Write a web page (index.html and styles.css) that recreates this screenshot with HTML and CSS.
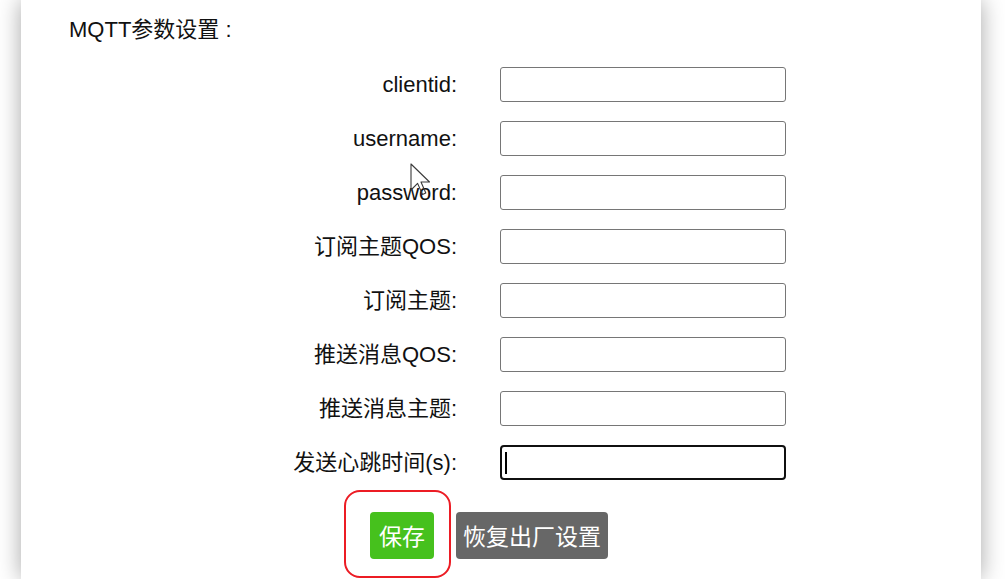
FILE: index.html
```html
<!DOCTYPE html>
<html lang="zh-CN">
<head>
    <meta charset="UTF-8">
    <meta name="viewport" content="width=device-width, initial-scale=1.0">
    <title>MQTT参数设置</title>
    <link rel="stylesheet" href="styles.css">
</head>
<body>
    <div class="card">
        <p class="title">MQTT参数设置 :</p>

        <form class="mqtt-form" id="mqttForm">
            <div class="row">
                <label for="clientid">clientid:</label>
                <input type="text" id="clientid" name="clientid">
            </div>
            <div class="row">
                <label for="username">username:</label>
                <input type="text" id="username" name="username">
            </div>
            <div class="row">
                <label for="password">password:</label>
                <input type="password" id="password" name="password">
            </div>
            <div class="row">
                <label for="subQos">订阅主题QOS:</label>
                <input type="text" id="subQos" name="subQos">
            </div>
            <div class="row">
                <label for="subTopic">订阅主题:</label>
                <input type="text" id="subTopic" name="subTopic">
            </div>
            <div class="row">
                <label for="pubQos">推送消息QOS:</label>
                <input type="text" id="pubQos" name="pubQos">
            </div>
            <div class="row">
                <label for="pubTopic">推送消息主题:</label>
                <input type="text" id="pubTopic" name="pubTopic">
            </div>
            <div class="row">
                <label for="keepalive">发送心跳时间(s):</label>
                <span class="field-wrap">
                    <input type="text" id="keepalive" name="keepalive" class="active">
                    <span class="caret"></span>
                </span>
            </div>

            <div class="actions">
                <button type="button" class="btn save">保存</button>
                <button type="button" class="btn reset">恢复出厂设置</button>
                <span class="mark"></span>
            </div>
        </form>

        <!-- mouse pointer in the screenshot -->
        <svg class="pointer" width="22" height="34" viewBox="0 0 22 34">
            <path d="M1 1 L1 27 L7.6 20.4 L12.5 31.5 L15.8 30 L11 19 L19.5 19 Z" fill="none" stroke="#3a3a3a" stroke-width="1.1" stroke-linejoin="round"/>
        </svg>
    </div>
</body>
</html>
```

FILE: styles.css
```css
body {
    margin: 0;
    background: #fff;
    font-family: "Liberation Sans", Arial, "Noto Sans CJK SC", sans-serif;
    color: #111;
    overflow: hidden;
}
.card {
    position: relative;
    width: 960px;
    height: 579px;
    margin-left: 21px;
    padding: 15px 48px 0;
    box-sizing: border-box;
    background: #fff;
    box-shadow: 0 0 22px rgba(0,0,0,0.35);
}
.title {
    margin: 0 0 22px;
    font-size: 22px;
    line-height: 30px;
}
.row {
    display: flex;
    align-items: center;
    gap: 43px;
    margin-bottom: 19px;
}
.row label {
    width: 388px;
    text-align: right;
    font-size: 22px;
    line-height: 26px;
}
.row input {
    width: 286px;
    height: 35px;
    padding: 0 6px;
    border: 1px solid #767676;
    border-radius: 3px;
    box-sizing: border-box;
    font-size: 18px;
    outline: none;
}
.field-wrap {
    position: relative;
    display: block;
}
.row input.active {
    border: 2px solid #101010;
    border-radius: 4px;
}
.caret {
    position: absolute;
    left: 5px;
    top: 7px;
    width: 2px;
    height: 22px;
    background: #000;
}
.actions {
    position: relative;
    display: flex;
    gap: 22px;
    margin-top: 32px;
    padding-left: 301px;
}
.btn {
    height: 47px;
    padding: 0 9px;
    border: none;
    border-radius: 4px;
    color: #fff;
    font-family: "Noto Sans CJK SC", sans-serif;
    font-size: 23px;
    line-height: 47px;
    cursor: pointer;
}
.btn.save {
    background: #46c11d;
}
.btn.reset {
    padding: 0 7px;
    background: #676767;
}
.mark {
    position: absolute;
    left: 275px;
    top: -22px;
    width: 107px;
    height: 88px;
    border: 2px solid #ec1c24;
    border-radius: 16px;
    box-sizing: border-box;
    pointer-events: none;
}
.pointer {
    position: absolute;
    left: 389px;
    top: 163px;
}
```
